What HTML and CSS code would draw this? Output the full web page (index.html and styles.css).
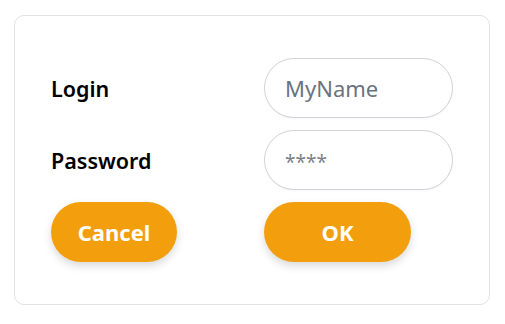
FILE: index.html
```html
<!DOCTYPE html>
<html>
<head>
<meta charset="utf-8">
<link rel="stylesheet" href="styles.css">
</head>
<body>
<div class="card">
  <div class="row">
    <label class="label">Login</label>
    <input class="field" type="text" placeholder="MyName">
  </div>
  <div class="row">
    <label class="label">Password</label>
    <input class="field field-pass" type="password" placeholder="****">
  </div>
  <div class="row">
    <div class="cell"><button class="btn btn-cancel">Cancel</button></div>
    <button class="btn btn-ok">OK</button>
  </div>
</div>
</body>
</html>
```
FILE: styles.css
```css
html, body {
  margin: 0;
  padding: 0;
  background: #ffffff;
}
body {
  padding: 15px 14px 0 14px;
  font-family: "Noto Sans", "Open Sans", sans-serif;
}
.card {
  width: 476px;
  height: 290px;
  box-sizing: border-box;
  border: 1px solid #e2e2e6;
  border-radius: 10px;
  padding: 42px 36px 0 36px;
  display: flex;
  flex-direction: column;
  gap: 12px;
}
.row {
  display: grid;
  grid-template-columns: 213px auto;
  align-items: center;
  justify-items: start;
}
.label {
  font-size: 21.5px;
  font-weight: 600;
  color: #000;
}
.field {
  width: 189px;
  height: 60px;
  box-sizing: border-box;
  border: 1px solid #d2d2da;
  border-radius: 30px;
  padding: 0 20px;
  font-family: inherit;
  font-size: 22px;
  color: #333;
  outline: none;
  box-shadow: 0 1px 2px rgba(0,0,0,0.04);
}
.field::placeholder {
  color: #6b7280;
}
.field-pass::placeholder {
  font-size: 19px;
  color: #7b8088;
}
.btn {
  height: 60px;
  border: none;
  border-radius: 30px;
  background: #f39e0c;
  color: #fff;
  font-family: inherit;
  font-size: 22px;
  font-weight: 700;
  box-shadow: 0 4px 8px rgba(0,0,0,0.15);
  cursor: pointer;
}
.btn-cancel { width: 126px; }
.btn-ok { width: 147px; }
```
